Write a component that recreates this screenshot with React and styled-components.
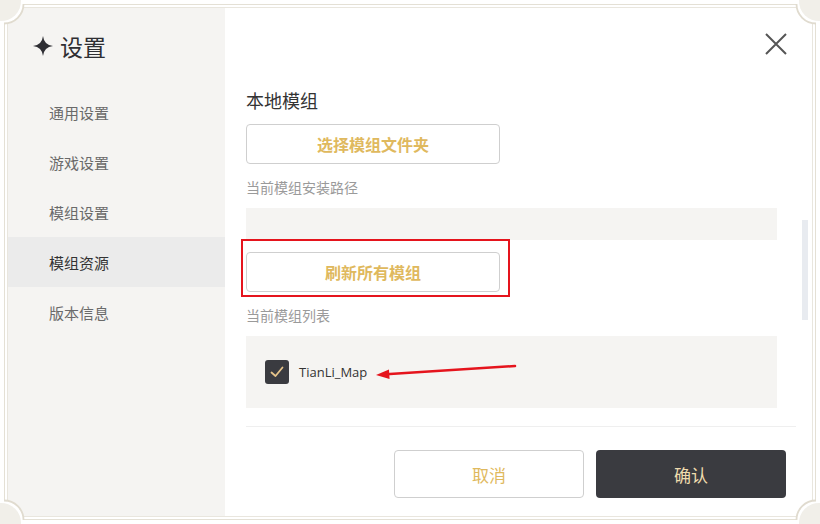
import React from "react";
import styled, { createGlobalStyle } from "styled-components";

const GlobalStyle = createGlobalStyle`
  html, body { margin: 0; padding: 0; background: #ffffff; }
  body { font-family: "Noto Sans CJK SC", "Noto Sans", sans-serif; }
  * { box-sizing: border-box; }
`;

const Frame = styled.div`
  position: relative;
  width: 820px;
  height: 524px;
  padding: 4px;
  background: #ffffff;
`;

const FrameOuter = styled.div`
  height: 100%;
  border: 1px solid #e4e0d5;
  padding: 2px;
`;

const FrameInner = styled.div`
  height: 100%;
  border: 1px solid #e9e6de;
  display: flex;
  overflow: hidden;
`;

const Corner = styled.svg`
  position: absolute;
  width: 26px;
  height: 26px;
  ${(p) => (p.$top ? "top: 0;" : "bottom: 0;")}
  ${(p) => (p.$left ? "left: 0;" : "right: 0;")}
  transform: ${(p) => `scale(${p.$left ? 1 : -1}, ${p.$top ? 1 : -1})`};
`;

const Sidebar = styled.aside`
  width: 217px;
  flex-shrink: 0;
  background: #f5f4f2;
  display: flex;
  flex-direction: column;
`;

const Brand = styled.div`
  height: 75px;
  display: flex;
  align-items: center;
  gap: 7px;
  padding-left: 25px;
  color: #2f2f33;
  font-size: 23px;
`;

const Nav = styled.nav`
  margin-top: 4px;
  display: flex;
  flex-direction: column;
`;

const NavItem = styled.div`
  height: 50px;
  display: flex;
  align-items: center;
  padding-left: 41px;
  font-size: 15px;
  color: ${(p) => (p.$active ? "#333" : "#6a6a6a")};
  background: ${(p) => (p.$active ? "#ebebeb" : "transparent")};
`;

const Main = styled.main`
  flex: 1;
  display: flex;
  flex-direction: column;
  min-width: 0;
`;

const Header = styled.div`
  display: flex;
  justify-content: flex-end;
  padding: 25px 25px 33px 0;
`;

const CloseButton = styled.button`
  width: 22px;
  height: 22px;
  padding: 0;
  border: none;
  background: none;
  display: flex;
  cursor: pointer;
`;

const ScrollArea = styled.div`
  position: relative;
  flex: 1;
  padding: 0 35px 17px 21px;
  display: flex;
  flex-direction: column;
`;

const SectionTitle = styled.div`
  font-size: 18px;
  line-height: 24px;
  color: #333;
`;

const OutlineButton = styled.button`
  width: ${(p) => p.$w || 254}px;
  height: ${(p) => p.$h || 40}px;
  border: 1px solid #cfcfcf;
  border-radius: 4px;
  background: #fff;
  color: #dfb95e;
  font-family: inherit;
  font-size: ${(p) => p.$fs || 16}px;
  font-weight: ${(p) => (p.$bold ? 700 : 400)};
  cursor: pointer;
`;

const DarkButton = styled.button`
  width: 190px;
  height: 48px;
  border: none;
  border-radius: 4px;
  background: #3a3b40;
  color: #efdcae;
  font-family: inherit;
  font-size: 17px;
  cursor: pointer;
`;

const Label = styled.div`
  font-size: 14px;
  line-height: 20px;
  color: #9a9a9a;
  margin-top: ${(p) => p.$mt || 0}px;
`;

const Spacer = styled.div`
  height: ${(p) => p.$h}px;
  flex-shrink: 0;
`;

const PathBox = styled.div`
  height: 32px;
  background: #f5f4f2;
`;

const Highlight = styled.div`
  position: relative;
  align-self: flex-start;
`;

const HighlightRing = styled.div`
  position: absolute;
  left: -5px;
  right: -10px;
  top: -13px;
  bottom: -5px;
  border: 2px solid #e5141d;
  pointer-events: none;
`;

const ModList = styled.div`
  height: 72px;
  background: #f5f4f2;
  display: flex;
  align-items: center;
  padding-left: 19px;
  position: relative;
`;

const ModRow = styled.label`
  display: flex;
  align-items: center;
  gap: 10px;
  font-family: "Open Sans", "Noto Sans", sans-serif;
  font-size: 13px;
  color: #333;
`;

const CheckBox = styled.span`
  width: 24px;
  height: 24px;
  border-radius: 3px;
  background: #3a3b40;
  display: flex;
  align-items: center;
  justify-content: center;
`;

const Arrow = styled.svg`
  position: absolute;
  left: 128px;
  top: 24px;
  width: 145px;
  height: 20px;
  overflow: visible;
`;

const ScrollThumb = styled.div`
  position: absolute;
  right: 4px;
  top: 132px;
  width: 6px;
  height: 100px;
  background: #e8ebf0;
`;

const Divider = styled.div`
  height: 1px;
  background: #efefef;
  margin: 0 16px 0 21px;
`;

const Footer = styled.div`
  display: flex;
  justify-content: flex-end;
  gap: 12px;
  padding: 23px 26px 18px 0;
`;

function CornerMark(props) {
  return (
    <Corner viewBox="0 0 26 26" {...props}>
      <path d="M0 0 H24 A23 23 0 0 1 0 24 Z" fill="#ffffff" />
      <path d="M0 0 H21 A20 20 0 0 1 0 21 Z" fill="#f1efe9" />
      <path d="M23.5 4 A19.5 19.5 0 0 1 4 23.5" fill="none" stroke="#e0dbcf" strokeWidth="1.8" />
    </Corner>
  );
}

export default function App() {
  const items = ["通用设置", "游戏设置", "模组设置", "模组资源", "版本信息"];
  return (
    <>
      <GlobalStyle />
      <Frame>
        <FrameOuter>
          <FrameInner>
            <Sidebar>
              <Brand>
                <svg width="20" height="20" viewBox="0 0 20 20">
                  <path d="M10 0 Q11 9 20 10 Q11 11 10 20 Q9 11 0 10 Q9 9 10 0 Z" fill="#2e2e33" />
                </svg>
                <span>设置</span>
              </Brand>
              <Nav>
                {items.map((t, i) => (
                  <NavItem key={t} $active={i === 3}>
                    {t}
                  </NavItem>
                ))}
              </Nav>
            </Sidebar>
            <Main>
              <Header>
                <CloseButton aria-label="close">
                  <svg width="22" height="22" viewBox="0 0 22 22">
                    <path d="M1 1 L21 21 M21 1 L1 21" stroke="#555" strokeWidth="2" fill="none" />
                  </svg>
                </CloseButton>
              </Header>
              <ScrollArea>
                <SectionTitle>本地模组</SectionTitle>
                <Spacer $h={12} />
                <OutlineButton $bold>选择模组文件夹</OutlineButton>
                <Label $mt={13}>当前模组安装路径</Label>
                <Spacer $h={11} />
                <PathBox />
                <Spacer $h={12} />
                <Highlight>
                  <OutlineButton $bold>刷新所有模组</OutlineButton>
                  <HighlightRing />
                </Highlight>
                <Label $mt={13}>当前模组列表</Label>
                <Spacer $h={11} />
                <ModList>
                  <ModRow>
                    <CheckBox>
                      <svg width="14" height="14" viewBox="0 0 14 14">
                        <path d="M1.5 7.5 L5.5 11 L12.5 2.5" stroke="#e6c48a" strokeWidth="1.8" fill="none" strokeLinecap="round" strokeLinejoin="round" />
                      </svg>
                    </CheckBox>
                    TianLi_Map
                  </ModRow>
                  <Arrow viewBox="0 0 145 20">
                    <path d="M141 6 L12 14.3" stroke="#e5141d" strokeWidth="2.6" strokeLinecap="round" />
                    <path d="M2 15 L15 9.5 L15.6 19 Z" fill="#e5141d" />
                  </Arrow>
                </ModList>
                <ScrollThumb />
              </ScrollArea>
              <Divider />
              <Footer>
                <OutlineButton $w={190} $h={48} $fs={17}>取消</OutlineButton>
                <DarkButton>确认</DarkButton>
              </Footer>
            </Main>
          </FrameInner>
        </FrameOuter>
        <CornerMark $top $left />
        <CornerMark $top />
        <CornerMark $left />
        <CornerMark />
      </Frame>
    </>
  );
}
